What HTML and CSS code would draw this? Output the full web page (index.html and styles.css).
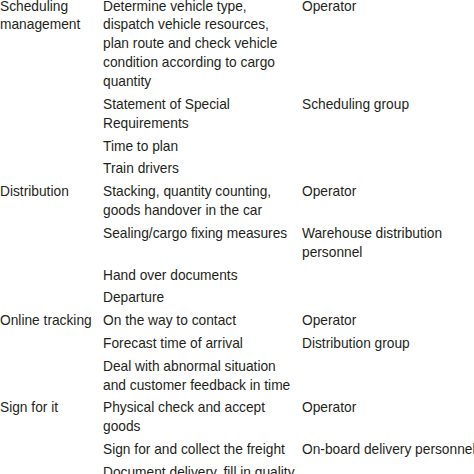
FILE: index.html
```html
<!DOCTYPE html>
<html>
<head>
<meta charset="utf-8">
<link rel="stylesheet" href="styles.css">
</head>
<body>
<div class="table">
  <div class="c1">Scheduling management</div><div class="c2">Determine vehicle type, dispatch vehicle resources, plan route and check vehicle condition according to cargo quantity</div><div class="c3">Operator</div>
  <div class="c1"></div><div class="c2">Statement of Special Requirements</div><div class="c3">Scheduling group</div>
  <div class="c1"></div><div class="c2">Time to plan</div><div class="c3"></div>
  <div class="c1"></div><div class="c2">Train drivers</div><div class="c3"></div>
  <div class="c1">Distribution</div><div class="c2">Stacking, quantity counting, goods handover in the car</div><div class="c3">Operator</div>
  <div class="c1"></div><div class="c2">Sealing/cargo fixing measures</div><div class="c3">Warehouse distribution personnel</div>
  <div class="c1"></div><div class="c2">Hand over documents</div><div class="c3"></div>
  <div class="c1"></div><div class="c2">Departure</div><div class="c3"></div>
  <div class="c1">Online tracking</div><div class="c2">On the way to contact</div><div class="c3">Operator</div>
  <div class="c1"></div><div class="c2">Forecast time of arrival</div><div class="c3">Distribution group</div>
  <div class="c1"></div><div class="c2">Deal with abnormal situation and customer feedback in time</div><div class="c3"></div>
  <div class="c1">Sign for it</div><div class="c2">Physical check and accept goods</div><div class="c3">Operator</div>
  <div class="c1"></div><div class="c2">Sign for and collect the freight</div><div class="c3">On-board delivery personnel</div>
  <div class="c1"></div><div class="c2">Document delivery, fill in quality feedback form</div><div class="c3"></div>
</div>
</body>
</html>
```
FILE: styles.css
```css
html, body {
  margin: 0;
  padding: 0;
  background: #ffffff;
  overflow: hidden;
  width: 474px;
  height: 474px;
}
.table {
  display: grid;
  grid-template-columns: 103px 199px 200px;
  margin-top: -4.4px;
  font-family: "Liberation Sans", Arial, Helvetica, sans-serif;
  font-size: 13.75px;
  line-height: 18.9px;
  color: #231f20;
}
.c1, .c2, .c3 {
  padding: 1.95px 0;
}
.c1 {
  padding-right: 6px;
}
.c2 {
  padding-right: 4px;
}
```
